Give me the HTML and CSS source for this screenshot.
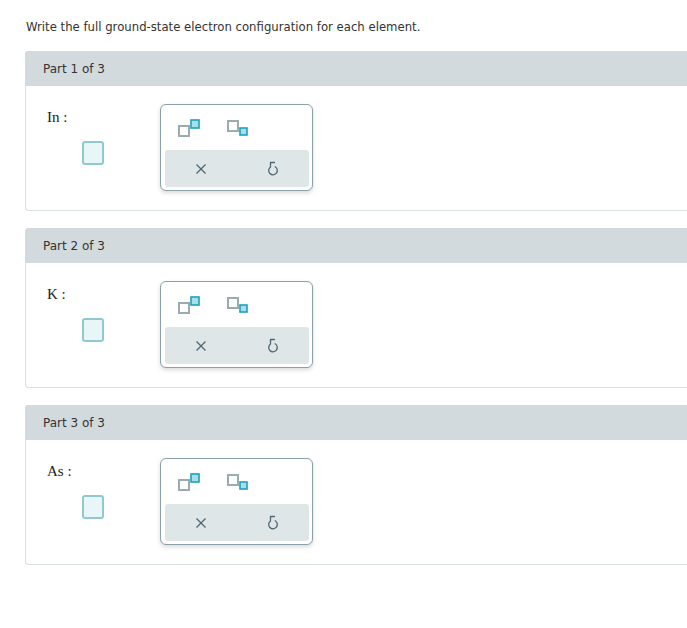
FILE: index.html
```html
<!DOCTYPE html>
<html>
<head>
<meta charset="utf-8">
<link rel="stylesheet" href="styles.css">
</head>
<body>
<div class="page">
  <p class="intro">Write the full ground-state electron configuration for each element.</p>

  <section class="part">
    <div class="part-head">Part 1 of 3</div>
    <div class="part-body">
      <div class="answer">
        <div class="label">In :</div>
        <div class="slot"></div>
      </div>
      <div class="palette">
        <div class="tools">
          <span class="tool sup"><svg width="24" height="20" viewBox="0 0 24 20"><rect x="2" y="9" width="10" height="10" fill="#fff" stroke="#9aabb2" stroke-width="2"/><rect x="14" y="3" width="8" height="8" fill="#a9dde8" stroke="#1ba2bf" stroke-width="1.6"/></svg></span>
          <span class="tool sub"><svg width="24" height="20" viewBox="0 0 24 20"><rect x="2" y="4" width="10" height="10" fill="#fff" stroke="#9aabb2" stroke-width="2"/><rect x="14" y="11" width="7" height="7" fill="#a9dde8" stroke="#1ba2bf" stroke-width="1.6"/></svg></span>
        </div>
        <div class="actions">
          <span class="btn"><svg width="12" height="12" viewBox="0 0 12 12"><path d="M1.5 1.5 L10.5 10.5 M10.5 1.5 L1.5 10.5" stroke="#4c6773" stroke-width="1.3" fill="none"/></svg></span>
          <span class="btn"><svg width="12" height="15" viewBox="0 0 12 15"><path d="M7.5 1.5 H3.5 V6 A4.3 4.3 0 1 0 8.15 5.78" stroke="#4c6773" stroke-width="1.3" fill="none" stroke-linecap="round" stroke-linejoin="round"/></svg></span>
        </div>
      </div>
    </div>
  </section>

  <section class="part">
    <div class="part-head">Part 2 of 3</div>
    <div class="part-body">
      <div class="answer">
        <div class="label">K :</div>
        <div class="slot"></div>
      </div>
      <div class="palette">
        <div class="tools">
          <span class="tool sup"><svg width="24" height="20" viewBox="0 0 24 20"><rect x="2" y="9" width="10" height="10" fill="#fff" stroke="#9aabb2" stroke-width="2"/><rect x="14" y="3" width="8" height="8" fill="#a9dde8" stroke="#1ba2bf" stroke-width="1.6"/></svg></span>
          <span class="tool sub"><svg width="24" height="20" viewBox="0 0 24 20"><rect x="2" y="4" width="10" height="10" fill="#fff" stroke="#9aabb2" stroke-width="2"/><rect x="14" y="11" width="7" height="7" fill="#a9dde8" stroke="#1ba2bf" stroke-width="1.6"/></svg></span>
        </div>
        <div class="actions">
          <span class="btn"><svg width="12" height="12" viewBox="0 0 12 12"><path d="M1.5 1.5 L10.5 10.5 M10.5 1.5 L1.5 10.5" stroke="#4c6773" stroke-width="1.3" fill="none"/></svg></span>
          <span class="btn"><svg width="12" height="15" viewBox="0 0 12 15"><path d="M7.5 1.5 H3.5 V6 A4.3 4.3 0 1 0 8.15 5.78" stroke="#4c6773" stroke-width="1.3" fill="none" stroke-linecap="round" stroke-linejoin="round"/></svg></span>
        </div>
      </div>
    </div>
  </section>

  <section class="part">
    <div class="part-head">Part 3 of 3</div>
    <div class="part-body">
      <div class="answer">
        <div class="label">As :</div>
        <div class="slot"></div>
      </div>
      <div class="palette">
        <div class="tools">
          <span class="tool sup"><svg width="24" height="20" viewBox="0 0 24 20"><rect x="2" y="9" width="10" height="10" fill="#fff" stroke="#9aabb2" stroke-width="2"/><rect x="14" y="3" width="8" height="8" fill="#a9dde8" stroke="#1ba2bf" stroke-width="1.6"/></svg></span>
          <span class="tool sub"><svg width="24" height="20" viewBox="0 0 24 20"><rect x="2" y="4" width="10" height="10" fill="#fff" stroke="#9aabb2" stroke-width="2"/><rect x="14" y="11" width="7" height="7" fill="#a9dde8" stroke="#1ba2bf" stroke-width="1.6"/></svg></span>
        </div>
        <div class="actions">
          <span class="btn"><svg width="12" height="12" viewBox="0 0 12 12"><path d="M1.5 1.5 L10.5 10.5 M10.5 1.5 L1.5 10.5" stroke="#4c6773" stroke-width="1.3" fill="none"/></svg></span>
          <span class="btn"><svg width="12" height="15" viewBox="0 0 12 15"><path d="M7.5 1.5 H3.5 V6 A4.3 4.3 0 1 0 8.15 5.78" stroke="#4c6773" stroke-width="1.3" fill="none" stroke-linecap="round" stroke-linejoin="round"/></svg></span>
        </div>
      </div>
    </div>
  </section>
</div>
</body>
</html>
```

FILE: styles.css
```css
html, body {
  margin: 0;
  padding: 0;
  background: #fff;
  overflow: hidden;
}

.page {
  padding: 19px 0 0 25px;
  width: 680px;
  font-family: "DejaVu Sans", Verdana, sans-serif;
  color: #333;
}

.intro {
  margin: 0 0 15px 1px;
  font-size: 11.7px;
  line-height: 17px;
}

.part {
  margin-bottom: 17px;
}

.part-head {
  height: 35px;
  line-height: 33px;
  padding-top: 2px;
  box-sizing: border-box;
  background: #d3dadd;
  padding-left: 18px;
  font-size: 12px;
  border-radius: 3px 0 0 0;
}

.part-body {
  height: 125px;
  border-left: 1px solid #d6e0e1;
  border-bottom: 1px solid #d6e0e1;
  border-radius: 0 0 0 4px;
  padding: 18px 0 0 21px;
  box-sizing: border-box;
  display: flex;
}

.answer {
  width: 113px;
  display: flex;
  flex-direction: column;
}

.label {
  font-family: "Liberation Serif", "Times New Roman", serif;
  font-size: 15px;
  line-height: 17px;
  margin-top: 5px;
  color: #222;
}

.slot {
  width: 18px;
  height: 20px;
  margin: 15px 0 0 35px;
  border: 2px solid #90c8d2;
  border-radius: 3px;
  background: #e8f5f9;
}

.palette {
  width: 153px;
  height: 87px;
  border: 1px solid #8aa1a9;
  border-radius: 6px;
  box-shadow: 0 2px 4px rgba(0, 0, 0, 0.15);
  padding: 0 3px 3px 4px;
  box-sizing: border-box;
  display: flex;
  flex-direction: column;
  background: #fff;
}

.tools {
  height: 45px;
  display: flex;
  align-items: flex-start;
  padding: 12px 0 0 12px;
  box-sizing: border-box;
  gap: 25px;
}

.tool {
  display: block;
  width: 24px;
  height: 20px;
}

.tool svg {
  display: block;
}

.actions {
  flex: 1;
  background: #dfe6e8;
  border-radius: 3px;
  display: flex;
}

.btn {
  flex: 1;
  display: flex;
  align-items: center;
  justify-content: center;
}

.btn svg {
  display: block;
}
```
